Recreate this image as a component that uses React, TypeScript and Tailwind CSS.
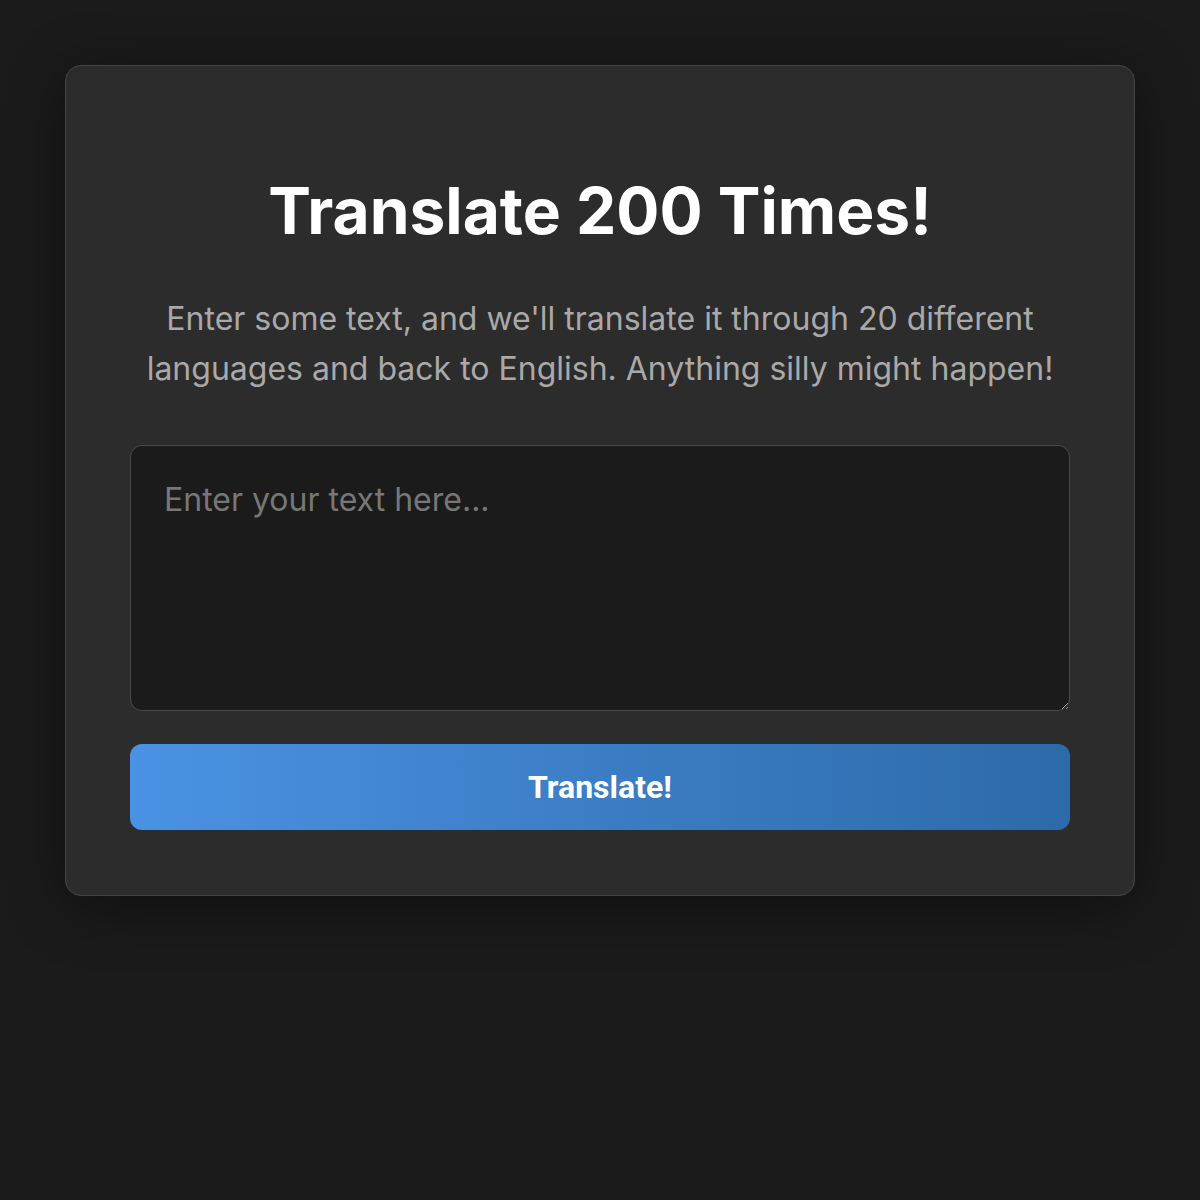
export default function App() {
  return (
    <div className="min-h-[1200px] w-full bg-[#1b1b1b] pt-[65px]" style={{ fontFamily: "Inter, 'Noto Sans', sans-serif" }}>
      <div className="mx-auto w-[1070px] rounded-[16px] border border-[#454545] bg-[#2c2c2c] px-[64px] pt-[107px] pb-[65px] shadow-[0_10px_60px_rgba(0,0,0,0.45)]">
        <h1 className="text-center text-[64px] font-bold leading-[1.2] text-white">Translate 200 Times!</h1>
        <p className="mt-[44px] text-center text-[32px] leading-[50px] text-[#a9a9a9]">
          Enter some text, and we'll translate it through 20 different languages and back to English. Anything silly might happen!
        </p>
        <textarea
          placeholder="Enter your text here..."
          className="mt-[51px] block h-[266px] w-full rounded-[12px] border border-[#4a4a4a] bg-[#1b1b1b] px-[33px] pt-[30px] pb-[28px] text-[32px] text-white placeholder:text-[#777] outline-none"
        />
        <button
          className="mt-[33px] block h-[86px] w-full rounded-[12px] bg-gradient-to-r from-[#4a92e3] to-[#2d6aa9] text-[32px] font-bold text-white"
          style={{ fontFamily: "Roboto, sans-serif" }}
        >
          Translate!
        </button>
      </div>
    </div>
  );
}
